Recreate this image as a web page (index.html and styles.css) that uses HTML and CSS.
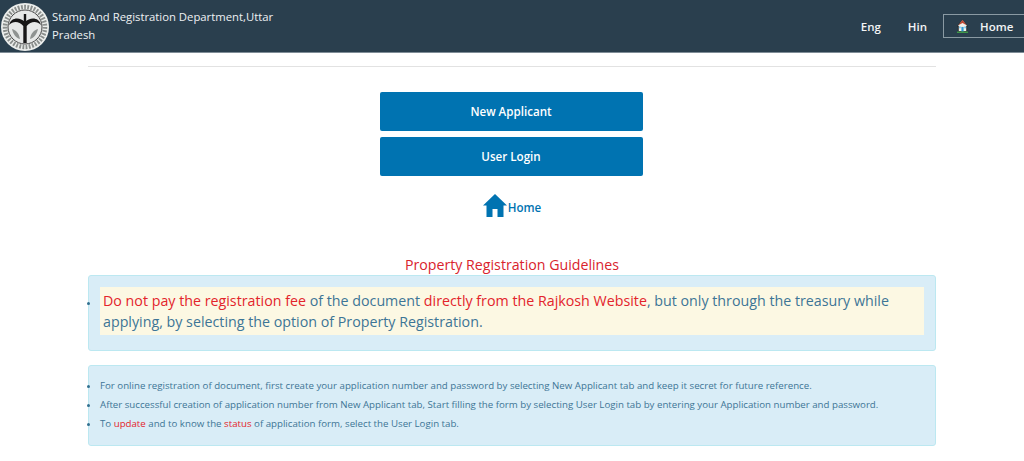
FILE: index.html
```html
<!DOCTYPE html>
<html>
<head>
	<title>Property Registration</title>
	<link rel="stylesheet" href="styles.css">
</head>
<body>
	<div class="topbar">
		<div class="brand">
			<svg class="logo" viewBox="0 0 50 50">
				<circle cx="25" cy="25" r="24" fill="#eceeec"/>
				<circle cx="25" cy="25" r="20" fill="none" stroke="#8a8e8c" stroke-width="4.500" stroke-dasharray="1.800 1.400"/>
				<circle cx="25" cy="25" r="17" fill="#e6e8e7" stroke="#4a4a4a" stroke-width="1"/>
				<path d="M9 23C11 15 20 15 25 20 30 15 39 15 41 23 37 19 31 19 26.700 24V41H23.300V24C19 19 13 19 9 23z" fill="#161616"/>
				<path d="M23.800 12h2.400v9h-2.400z" fill="#161616"/>
				<path d="M12 27c4 1 7 4 8 10-4-1-7-5-8-10zM38 27c-4 1-7 4-8 10 4-1 7-5 8-10z" fill="#8f9391"/>
			</svg>
			<div class="brand-name">Stamp And Registration Department,Uttar Pradesh</div>
		</div>
		<div class="topnav">
			<a class="lang">Eng</a>
			<a class="lang">Hin</a>
			<a class="home-btn">
				<svg class="home-emoji" viewBox="0 0 14 15">
					<path d="M7 .8 1.500 7.500H2.500V13.500H11.500V7.500H12.500z" fill="#f3efe8" stroke="#1e1e1e" stroke-width=".8"/>
					<path d="M7 1 2.600 6.800 7 4.200 11.400 6.800z" fill="#c2452f"/>
					<rect x="5.800" y="8.500" width="2.400" height="5" fill="#2f9bd6"/>
					<rect x="3.300" y="8" width="1.700" height="2" fill="#6fc3ea"/>
					<rect x="9" y="8" width="1.700" height="2" fill="#6fc3ea"/>
					<rect x="1" y="13.500" width="12" height="1.500" fill="#3f9b4b"/>
				</svg>
				<span>Home</span>
			</a>
		</div>
	</div>

	<div class="container">
		<hr class="rule">

		<div class="actions">
			<a class="action-btn">New Applicant</a>
			<a class="action-btn">User Login</a>
			<a class="home-link">
				<svg class="home-icon" viewBox="0 0 24 23">
					<path d="M12 0 0 11.500H3.500V23H9.500V15H14.500V23H20.500V11.500H24z" fill="#0073b1"/>
				</svg>
				<span>Home</span>
			</a>
		</div>

		<h4 class="guide-title">Property Registration Guidelines</h4>

		<div class="alert alert-big">
			<ul>
				<li><div class="note"><span class="red">Do not pay the registration fee</span> of the document <span class="red">directly from the Rajkosh Website</span>, but only through the treasury while applying, by selecting the option of Property Registration.</div></li>
			</ul>
		</div>

		<div class="alert alert-small">
			<ul>
				<li>For online registration of document, first create your application number and password by selecting New Applicant tab and keep it secret for future reference.</li>
				<li>After successful creation of application number from New Applicant tab, Start filling the form by selecting User Login tab by entering your Application number and password.</li>
				<li>To <span class="red">update</span> and to know the <span class="red">status</span> of application form, select the User Login tab.</li>
			</ul>
		</div>
	</div>
</body>
</html>
```

FILE: styles.css
```css
* {
	box-sizing: border-box;
}
body {
	margin: 0;
	background: #fff;
	font-family: "Open Sans", "Noto Sans", sans-serif;
	color: #3d7596;
}
ul {
	margin: 0;
	padding: 0;
}
li::marker {
	font-size: 9px;
	color: #31708f;
}
.topbar {
	height: 53px;
	background: #2a3f4e;
	border-bottom: 1px solid #7f8d97;
	display: flex;
	justify-content: space-between;
	align-items: center;
}
.brand {
	display: flex;
	align-items: center;
}
.logo {
	width: 50px;
	height: 50px;
	margin-top: 1px;
	flex: none;
}
.brand-name {
	width: 226px;
	margin-left: 2px;
	color: #eef1f3;
	font-size: 11.300px;
	line-height: 18px;
}
.topnav {
	display: flex;
	align-items: center;
}
.lang {
	color: #f2f4f5;
	font-size: 11.500px;
	font-weight: 600;
	margin-right: 27px;
}
.lang + .lang {
	margin-right: 16px;
}
.home-btn {
	width: 81px;
	height: 24px;
	border: 1px solid #8a9aa3;
	border-right: 0;
	color: #f2f4f5;
	font-size: 11.500px;
	font-weight: 600;
	display: flex;
	align-items: center;
	padding-left: 12px;
}
.home-emoji {
	width: 13px;
	height: 14px;
	margin-right: 11px;
}
.container {
	width: 848px;
	margin: 0 auto;
}
.rule {
	margin: 13px 0 0;
	border: 0;
	border-top: 1px solid #e2e2e2;
}
.actions {
	display: flex;
	flex-direction: column;
	align-items: center;
	margin-top: 25px;
	padding-right: 2px;
}
.action-btn {
	width: 263px;
	height: 39px;
	margin-bottom: 6px;
	background: #0073b1;
	border-radius: 2px;
	color: #fff;
	font-size: 11.600px;
	font-weight: 600;
	display: flex;
	align-items: center;
	justify-content: center;
}
.home-link {
	display: flex;
	align-items: flex-end;
	margin-top: 12px;
	margin-left: 2px;
	color: #0073b1;
	font-size: 11.600px;
	font-weight: 600;
}
.home-icon {
	width: 24px;
	height: 23px;
	margin-right: 1px;
}
.home-link span {
	line-height: 18px;
}
.guide-title {
	margin: 38px 0 0;
	font-size: 14.200px;
	font-weight: 400;
	line-height: 20px;
	text-align: center;
	color: #d9232d;
}
.alert {
	background: #d9edf7;
	border: 1px solid #bce8f1;
	border-radius: 3px;
}
.alert-big {
	margin-top: 0;
	height: 76px;
	padding: 11px 11px 0 11px;
}
.alert-big .note {
	background: #fcf8e3;
	padding: 3px;
	font-size: 14.250px;
	line-height: 21px;
}
.alert-small {
	margin-top: 14px;
	height: 81px;
	padding: 10px 11px 0 11px;
	font-size: 9.700px;
	line-height: 19px;
}
.red {
	color: #e3242b;
}
```
